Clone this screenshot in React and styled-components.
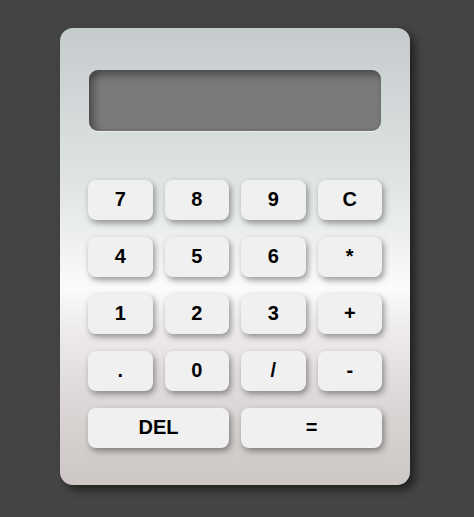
import React from "react";
import styled, { createGlobalStyle } from "styled-components";

const Global = createGlobalStyle`
  html, body { margin: 0; padding: 0; background: #454545; }
  body { font-family: "Liberation Sans", Arial, sans-serif; }
`;

const Page = styled.div`
  width: 474px;
  height: 517px;
  padding: 28px 0 0 60px;
  box-sizing: border-box;
  background: #454545;
`;

const Body = styled.div`
  width: 350px;
  height: 457px;
  box-sizing: border-box;
  padding: 42px 28px 0 28px;
  border-radius: 13px;
  background: linear-gradient(
    to bottom,
    #c5cbcd 0%,
    #d3d8d9 18%,
    #e2e6e6 36%,
    #f3f4f4 50%,
    #fbfbfb 57%,
    #efedec 65%,
    #e0dcdb 78%,
    #d3cdcc 92%,
    #cdc7c6 100%
  );
  box-shadow: 5px 5px 10px rgba(0, 0, 0, 0.55);
  display: flex;
  flex-direction: column;
  gap: 49px;
`;

const Display = styled.div`
  margin: 0 1px;
  height: 61px;
  border-radius: 9px;
  background: #7a7a7a;
  box-shadow: inset 4px 4px 8px rgba(0, 0, 0, 0.45), 0 1px 0 rgba(255, 255, 255, 0.6);
`;

const Keypad = styled.div`
  display: grid;
  grid-template-columns: repeat(4, 1fr);
  grid-auto-rows: 40px;
  column-gap: 12px;
  row-gap: 17px;
`;

const Key = styled.button`
  grid-column: span ${(p) => p.$span || 1};
  border: none;
  border-radius: 8px;
  background: #f0f0f0;
  box-shadow: 2px 3px 6px rgba(0, 0, 0, 0.4);
  font-family: "Liberation Sans", Arial, sans-serif;
  font-weight: bold;
  font-size: 20px;
  line-height: 1;
  color: #000;
  padding: 0 0 3px 0;
  cursor: pointer;
`;

const keys = [
  ["7"], ["8"], ["9"], ["C"],
  ["4"], ["5"], ["6"], ["*"],
  ["1"], ["2"], ["3"], ["+"],
  ["."], ["0"], ["/"], ["-"],
  ["DEL", 2], ["=", 2],
];

export default function App() {
  return (
    <>
      <Global />
      <Page>
        <Body>
          <Display />
          <Keypad>
            {keys.map(([label, span]) => (
              <Key key={label} $span={span}>{label}</Key>
            ))}
          </Keypad>
        </Body>
      </Page>
    </>
  );
}
